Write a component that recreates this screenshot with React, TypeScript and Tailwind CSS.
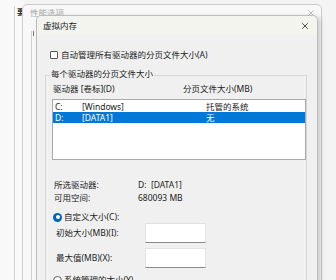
const FONT = "font-['Noto_Sans','Noto_Sans_CJK_SC',sans-serif]";

function CloseIcon({ className }: { className?: string }) {
  return (
    <svg viewBox="0 0 10 10" className={className} fill="none">
      <path d="M1.5 1.5 L8.5 8.5 M8.5 1.5 L1.5 8.5" stroke="currentColor" strokeWidth="1.1" />
    </svg>
  );
}

function Radio({ checked }: { checked?: boolean }) {
  return checked ? (
    <span className="flex h-[9px] w-[9px] items-center justify-center rounded-full bg-[#0067c0]">
      <span className="h-[4px] w-[4px] rounded-full bg-white" />
    </span>
  ) : (
    <span className="h-[9px] w-[9px] rounded-full border border-[#5a5a5a] bg-white" />
  );
}

function SizeInput({ label }: { label: string }) {
  return (
    <div className="ml-[10px] flex h-[20px] items-center">
      <span className="w-[89px]">{label}</span>
      <div className="h-[20px] w-[61px] border border-[#e2e2e2] border-b-[#8a8a8a] bg-white" />
    </div>
  );
}

export default function App() {
  return (
    <div className={`relative h-[280px] w-[336px] overflow-hidden bg-[#f4f4f4] text-[8.5px] leading-[12px] text-[#222] ${FONT}`}>
      {/* window furthest back, only a sliver shows */}
      <div className="absolute left-0 top-0 h-[280px] w-[24px] bg-[#f9f9f9]">
        <div className="ml-[14px] mt-[6px] h-[274px] border-l border-[#d4d4d4] pl-[2px]">
          <span className="font-bold text-[#333]">要</span>
          <div className="ml-[5px] mt-[22px] h-[6px] w-[1px] bg-[#777]" />
          <div className="ml-[5px] mt-[94px] h-[7px] w-[1px] bg-[#888]" />
        </div>
      </div>

      {/* 性能选项 dialog behind */}
      <div className="absolute left-[22px] top-[4px] h-[290px] w-[300px] rounded-t-[5px] border border-[#cdcdcd] bg-[#f8f8f8]">
        <div className="flex h-[16px] items-center justify-between pl-[7px] pr-[6px] text-[#a8a8a8]">
          <span>性能选项</span>
          <CloseIcon className="h-[8px] w-[8px] text-[#b5b5b5]" />
        </div>
        <div className="ml-[8px] mt-[10px] h-[260px] border-l border-[#d0d0d0] pl-[1px]">
          <div className="mt-[6px] h-[5px] w-[1px] bg-[#777]" />
        </div>
      </div>

      {/* 虚拟内存 dialog */}
      <div className="absolute left-[36px] top-[15px] h-[290px] w-[282px] rounded-t-[5px] border border-[#bdbdbd] bg-[#f0f0f0] shadow-[3px_2px_5px_rgba(0,0,0,0.18)]">
        <div className="flex h-[19px] items-center justify-between rounded-t-[5px] bg-[#f4f4ef] pl-[6px] pr-[8px]">
          <span>虚拟内存</span>
          <CloseIcon className="h-[8px] w-[8px] text-[#333]" />
        </div>

        <div className="flex flex-col pl-[8px] pr-[10px]">
          <div className="ml-[5px] mt-[14px] flex h-[12px] items-center gap-[3px]">
            <span className="h-[8px] w-[8px] rounded-[1px] border border-[#555] bg-white" />
            <span>自动管理所有驱动器的分页文件大小(A)</span>
          </div>

          <div className="mt-[14px] flex h-[220px] flex-col border border-[#d6d6d6]">
            <span className="-mt-[8px] ml-[4px] w-fit bg-[#f0f0f0] px-[1px]">每个驱动器的分页文件大小</span>

            <div className="mt-[3px] flex h-[12px] pl-[7px]">
              <span className="w-[130px]">驱动器 [卷标](D)</span>
              <span>分页文件大小(MB)</span>
            </div>

            <div className="ml-[6px] mt-[4px] h-[61px] border border-[#a9a9a9] bg-white pt-[1px]">
              <div className="flex h-[11px] items-center pl-[2px]">
                <span className="w-[27px]">C:</span>
                <span className="w-[124px]">[Windows]</span>
                <span>托管的系统</span>
              </div>
              <div className="flex h-[11px] items-center bg-[#0078d7] pl-[2px] text-white">
                <span className="w-[27px]">D:</span>
                <span className="w-[124px]">[DATA1]</span>
                <span>无</span>
              </div>
            </div>

            <div className="ml-[8px] mt-[18px] flex h-[13px] items-center">
              <span className="w-[84px]">所选驱动器:</span>
              <span>D:&nbsp; [DATA1]</span>
            </div>
            <div className="ml-[8px] flex h-[13px] items-center">
              <span className="w-[84px]">可用空间:</span>
              <span>680093 MB</span>
            </div>

            <div className="ml-[7px] mt-[7px] flex h-[12px] items-center gap-[2px]">
              <Radio checked />
              <span>自定义大小(C):</span>
            </div>

            <SizeInput label="初始大小(MB)(I):" />
            <div className="mt-[5px]">
              <SizeInput label="最大值(MB)(X):" />
            </div>

            <div className="ml-[7px] mt-[6px] flex h-[12px] items-center gap-[2px]">
              <Radio />
              <span>系统管理的大小(Y)</span>
            </div>
          </div>
        </div>
      </div>
    </div>
  );
}
